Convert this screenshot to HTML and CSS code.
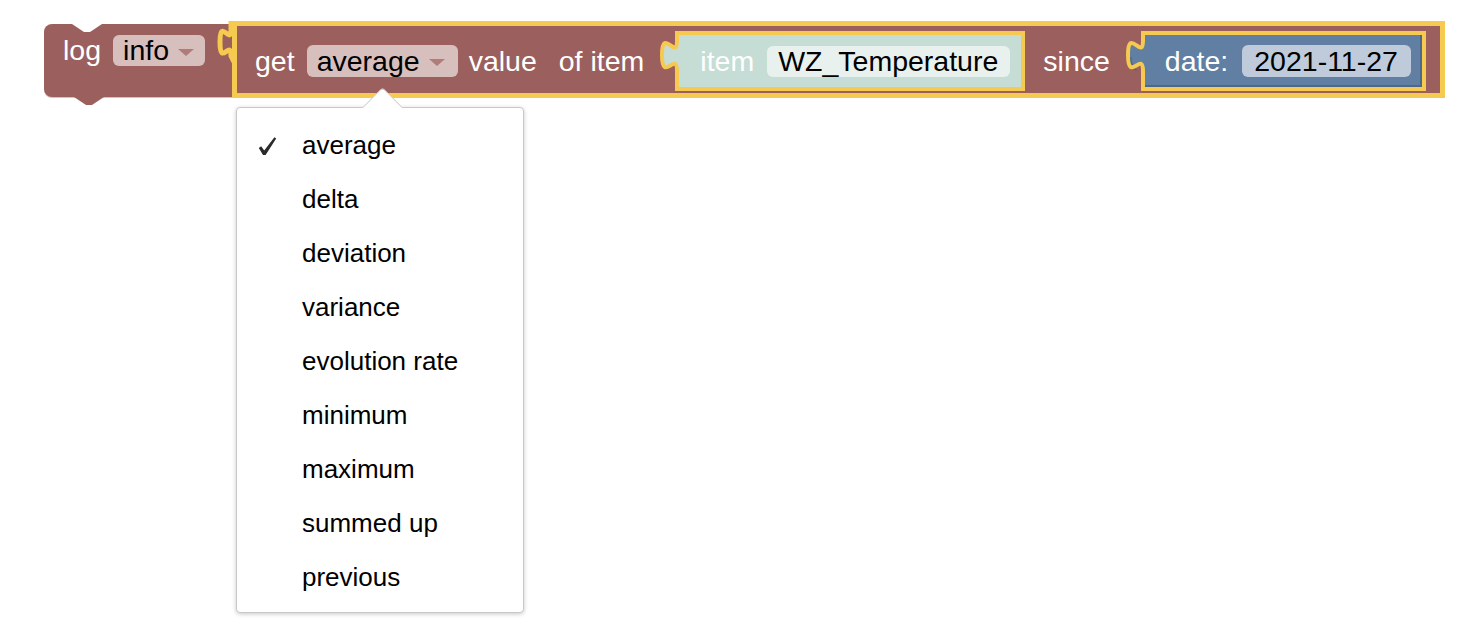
FILE: index.html
```html
<!DOCTYPE html>
<html lang="en">
<head>
<meta charset="utf-8">
<title>Blockly log block</title>
<link rel="stylesheet" href="styles.css">
</head>
<body>
<div class="workspace">
  <div class="log-block">
    <div class="log-head">
      <span class="label">log</span>
      <span class="field dd f-info"><span class="ftext">info</span><span class="caret"></span></span>
    </div>
    <div class="get-block">
      <svg class="get-tab" width="30" height="50" viewBox="0 0 30 50"><path d="M 19 0 L 19 8 c 0,18 -11,-13 -11,13 s 11,-4 11,14 L 22 41" fill="none" stroke="#f6c950" stroke-width="5"/></svg>
      <span class="label">get</span>
      <span class="field dd f-avg"><span class="ftext">average</span><span class="caret"></span></span>
      <span class="label l-value">value</span>
      <span class="label l-of">of item</span>
      <div class="value-block item-block">
        <svg class="in-tab" width="30" height="60" viewBox="0 0 30 60"><path d="M 28 10 L 24 10 c 0,20 -15,-15 -15,14 s 15,-5 15,16 L 28 40 Z" fill="#c5ddd5"/><path d="M 24 8 L 24 10 c 0,20 -15,-15 -15,14 s 15,-5 15,16 L 24 42" fill="none" stroke="#f6c950" stroke-width="4"/></svg>
        <span class="label">item</span>
        <span class="field f-item"><span class="ftext">WZ_Temperature</span></span>
      </div>
      <span class="label l-since">since</span>
      <div class="value-block date-block">
        <svg class="in-tab" width="30" height="60" viewBox="0 0 30 60"><path d="M 28 10 L 24 10 c 0,20 -15,-15 -15,14 s 15,-5 15,16 L 28 40 Z" fill="#607fa2"/><path d="M 11.5 26 c 0,6 2,12 6,13" fill="none" stroke="#4d6889" stroke-width="2"/><path d="M 24 8 L 24 10 c 0,20 -15,-15 -15,14 s 15,-5 15,16 L 24 42" fill="none" stroke="#f6c950" stroke-width="4"/></svg>
        <span class="label">date:</span>
        <span class="field f-date"><span class="ftext">2021-11-27</span></span>
      </div>
    </div>
  </div>

  <div class="menu">
    <div class="menu-arrow"></div>
    <div class="menu-item">
      <span class="check"><svg width="19" height="19" viewBox="0 0 19 19"><path d="M 0.8 11 L 3.2 9.2 L 6.2 13.4 L 16.4 0.3 L 18.2 1.5 L 7.6 18 L 5 18 Z" fill="#2b2b2b"/></svg></span>
      <span>average</span>
    </div>
    <div class="menu-item"><span class="check"></span><span>delta</span></div>
    <div class="menu-item"><span class="check"></span><span>deviation</span></div>
    <div class="menu-item"><span class="check"></span><span>variance</span></div>
    <div class="menu-item"><span class="check"></span><span>evolution rate</span></div>
    <div class="menu-item"><span class="check"></span><span>minimum</span></div>
    <div class="menu-item"><span class="check"></span><span>maximum</span></div>
    <div class="menu-item"><span class="check"></span><span>summed up</span></div>
    <div class="menu-item"><span class="check"></span><span>previous</span></div>
  </div>
</div>
</body>
</html>
```

FILE: styles.css
```css
html, body {
  margin: 0;
  padding: 0;
  background: #ffffff;
}

.workspace {
  position: relative;
  width: 1476px;
  height: 622px;
  box-sizing: border-box;
  padding: 24px 0 0 44px;
  font-family: "Liberation Sans", Arial, sans-serif;
  font-size: 28.5px;
}

.label {
  color: #ffffff;
  white-space: nowrap;
  line-height: 1.15;
}

.field {
  display: inline-flex;
  align-items: center;
  box-sizing: border-box;
  height: 31px;
  border-radius: 6px;
  padding: 0 11px 0 10px;
  color: #000000;
  white-space: nowrap;
  line-height: 1.15;
  flex: none;
}

.caret {
  width: 0;
  height: 0;
  margin: 3px 0 0 9px;
  border-left: 8px solid transparent;
  border-right: 8px solid transparent;
  border-top: 7px solid #b07c7a;
}

.f-info, .f-avg {
  background: #d7bfbe;
}

.f-avg {
  padding-right: 13px;
}

/* log statement block */
.log-block {
  position: relative;
  display: inline-flex;
  align-items: flex-start;
  height: 73px;
  background: #9b605d;
  border-radius: 8px;
  box-shadow: 0 1px 0 rgba(60, 20, 20, 0.25);
}

.log-block::before {
  content: "";
  position: absolute;
  top: 0;
  left: 28px;
  width: 30px;
  height: 8px;
  background: #ffffff;
  clip-path: polygon(0 0, 100% 0, 60% 100%, 40% 100%);
}

.log-block::after {
  content: "";
  position: absolute;
  top: 100%;
  left: 30px;
  width: 30px;
  height: 8px;
  background: #9b605d;
  clip-path: polygon(0 0, 100% 0, 60% 100%, 40% 100%);
}

.log-head {
  display: flex;
  align-items: center;
  gap: 12px;
  height: 31px;
  margin-top: 11px;
  padding-left: 19px;
}

/* get ... value block */
.get-block {
  position: relative;
  display: flex;
  align-items: center;
  box-sizing: border-box;
  height: 77px;
  margin: -3px 0 0 27px;
  padding: 5px 14px 2px 18px;
  border: 5px solid #f6c950;
  background: #9b605d;
}

.get-tab {
  position: absolute;
  left: -25px;
  top: -5px;
  overflow: visible;
}

.get-block > .f-avg {
  margin-left: 12px;
  height: 32px;
}

.l-value {
  margin-left: 11px;
}

.l-of {
  margin-left: 22px;
}

.item-block {
  margin-left: 31px;
}

.l-since {
  margin-left: 18px;
}

.date-block {
  margin-left: 31px;
}

/* value blocks */
.value-block {
  position: relative;
  display: flex;
  align-items: center;
  box-sizing: border-box;
  height: 60px;
  border: 4px solid #f6c950;
  padding: 0 11px 0 21px;
  flex: none;
}

.in-tab {
  position: absolute;
  left: -26px;
  top: -4px;
  overflow: visible;
}

.item-block {
  background: #c5ddd5;
}

.item-block .label {
  margin-right: 13px;
}

.f-item {
  background: #e8f1ee;
  height: 31px;
  padding: 0 12px 0 11px;
}

.date-block {
  background: #607fa2;
  padding-left: 20px;
  box-shadow: inset -2px -2px 0 #4d6889;
}

.date-block .label {
  margin-right: 14px;
}

.f-date {
  background: #bfcbda;
  height: 32px;
  padding: 0 13px 0 12px;
}

/* dropdown menu */
.menu {
  position: absolute;
  left: 236px;
  top: 107px;
  width: 288px;
  height: 506px;
  box-sizing: border-box;
  padding: 10px 0;
  background: #ffffff;
  border: 1px solid #c9c9c9;
  border-radius: 4px;
  box-shadow: 0 1px 4px rgba(0, 0, 0, 0.22);
  font-size: 26px;
  color: #000000;
}

.menu-arrow {
  position: absolute;
  left: 131px;
  top: -15px;
  width: 28px;
  height: 28px;
  background: #ffffff;
  border-top: 1px solid #c9c9c9;
  border-left: 1px solid #c9c9c9;
  border-top-left-radius: 4px;
  transform: rotate(45deg);
}

.menu-item {
  position: relative;
  display: flex;
  align-items: center;
  height: 54px;
  padding-left: 21px;
  white-space: nowrap;
}

.check {
  display: flex;
  align-items: center;
  width: 44px;
  flex: none;
  margin-top: 2px;
}
```
